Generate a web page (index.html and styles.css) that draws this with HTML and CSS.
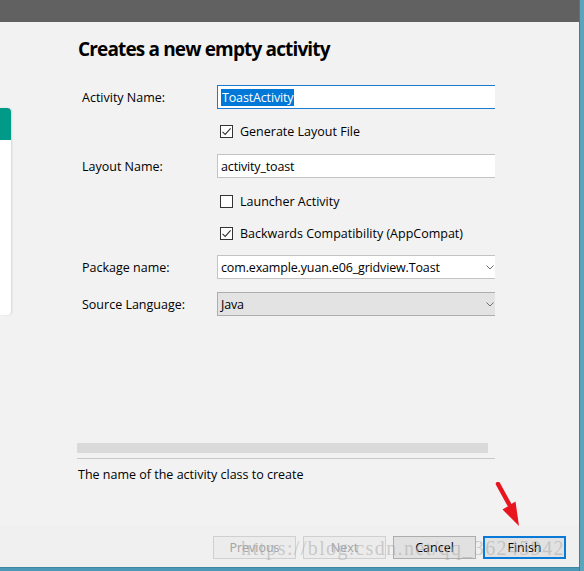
FILE: index.html
```html
<!DOCTYPE html>
<html>
<head>
<meta charset="utf-8">
<link rel="stylesheet" href="styles.css">
</head>
<body>
<div class="window">
  <div class="pane">
    <div class="titlebar"></div>
    <div class="main">
      <div class="side">
        <div class="card"><div class="card-head"></div></div>
      </div>
      <div class="content">
        <h1 class="heading">Creates a new empty activity</h1>
        <div class="form">
          <div class="row field-row">
            <span class="lbl">Activity Name:</span>
            <div class="input focused"><span class="sel">ToastActivity</span></div>
          </div>
          <div class="row check-row gap-11">
            <span class="lbl"></span>
            <div class="check">
              <span class="box"><svg viewBox="0 0 13 13" width="13" height="13"><path d="M2.5 6.8 L5.2 9.4 L10.6 3.4" fill="none" stroke="#333" stroke-width="1.1"/></svg></span>
              <span class="check-text">Generate Layout File</span>
            </div>
          </div>
          <div class="row field-row gap-11">
            <span class="lbl">Layout Name:</span>
            <div class="input">activity_toast</div>
          </div>
          <div class="row check-row gap-12">
            <span class="lbl"></span>
            <div class="check">
              <span class="box"></span>
              <span class="check-text">Launcher Activity</span>
            </div>
          </div>
          <div class="row check-row gap-9">
            <span class="lbl"></span>
            <div class="check">
              <span class="box"><svg viewBox="0 0 13 13" width="13" height="13"><path d="M2.5 6.8 L5.2 9.4 L10.6 3.4" fill="none" stroke="#333" stroke-width="1.1"/></svg></span>
              <span class="check-text">Backwards Compatibility (AppCompat)</span>
            </div>
          </div>
          <div class="row field-row gap-10">
            <span class="lbl">Package name:</span>
            <div class="input select">
              <span class="val">com.example.yuan.e06_gridview.Toast</span>
              <svg class="chev" viewBox="0 0 8 5" width="8" height="5"><path d="M0.5 0.5 L4 4 L7.5 0.5" fill="none" stroke="#707070" stroke-width="1"/></svg>
            </div>
          </div>
          <div class="row field-row gap-13">
            <span class="lbl">Source Language:</span>
            <div class="input select combo">
              <span class="val">Java</span>
              <svg class="chev" viewBox="0 0 8 5" width="8" height="5"><path d="M0.5 0.5 L4 4 L7.5 0.5" fill="none" stroke="#707070" stroke-width="1"/></svg>
            </div>
          </div>
        </div>
        <div class="bottom">
          <div class="hscroll"></div>
          <div class="sep"></div>
          <p class="help">The name of the activity class to create</p>
        </div>
      </div>
    </div>
    <div class="footer">
      <button class="btn disabled">Previous</button>
      <button class="btn disabled">Next</button>
      <button class="btn">Cancel</button>
      <button class="btn primary">Finish</button>
    </div>
    <div class="bottom-edge"></div>
  </div>
  <div class="right-edge"></div>
  <div class="watermark">https://blog.csdn.net/qq_36245942</div>
  <svg class="arrow" viewBox="0 0 40 50" width="40" height="50">
    <path d="M3 2 L14 22" stroke="#e8141e" stroke-width="4.5" stroke-linecap="round" fill="none"/>
    <path d="M24 44 L7.5 27.5 L20.5 19.5 Z" fill="#e8141e"/>
  </svg>
</div>
</body>
</html>
```

FILE: styles.css
```css
* { box-sizing: border-box; }
html, body { margin: 0; padding: 0; }
body {
  width: 584px;
  height: 571px;
  overflow: hidden;
  font-family: "Open Sans", "Noto Sans", sans-serif;
  font-size: 12.5px;
  color: #000;
}
.window {
  position: relative;
  display: grid;
  grid-template-columns: 579px 5px;
  width: 584px;
  height: 571px;
}
.pane {
  display: flex;
  flex-direction: column;
  height: 571px;
  background: #f2f2f2;
}
.titlebar { height: 22px; background: #616161; flex: none; }
.main { flex: 1; display: flex; min-height: 0; }
.side { width: 77px; flex: none; }
.card {
  margin-top: 86px;
  width: 11px;
  height: 207px;
  background: #fff;
  border-radius: 0 4px 4px 0;
  box-shadow: 1px 0 2px rgba(0,0,0,0.12);
  overflow: hidden;
}
.card-head { height: 32px; background: #009a88; }
.content {
  width: 418px;
  display: flex;
  flex-direction: column;
}
.heading {
  margin: 0;
  padding: 15px 0 0 1px;
  font-size: 19px;
  line-height: 24px;
  font-weight: 700;
  letter-spacing: -0.85px;
}
.form { margin-top: 24px; padding-left: 5px; }
.row { display: grid; grid-template-columns: 135px 278px; align-items: center; }
.field-row { height: 24px; }
.check-row { height: 23px; }
.gap-9 { margin-top: 9px; }
.gap-10 { margin-top: 10px; }
.gap-11 { margin-top: 11px; }
.gap-12 { margin-top: 12px; }
.gap-13 { margin-top: 13px; }
.lbl { font-size: 12.5px; }
.input {
  height: 24px;
  background: #fff;
  border: 1px solid #c3c3c3;
  border-right: none;
  padding-left: 3px;
  display: flex;
  align-items: center;
  font-size: 12.5px;
  letter-spacing: -0.15px;
  white-space: nowrap;
}
.input.focused { border-color: #1b7bd0; }
.sel {
  background: #0078d7;
  color: #fff;
  line-height: 17px;
  padding: 0 1px;
}
.select { justify-content: space-between; padding-right: 0; }
.combo { background: #e3e3e3; border-color: #adadad; }
.chev { margin-right: 1px; }
.check { display: flex; align-items: center; padding-left: 3px; gap: 7px; }
.box {
  width: 13px; height: 13px;
  border: 1px solid #333;
  background: #fff;
  display: block;
  position: relative;
}
.box svg { display: block; margin: -1px 0 0 -1px; }
.check-text { font-size: 12.5px; }
.bottom { margin-top: auto; padding-bottom: 42px; }
.hscroll { width: 411px; height: 10px; background: #dadada; }
.sep { margin-top: 5px; height: 1px; background: #c8c8c8; }
.help { margin: 8px 0 0 1px; font-size: 12.5px; line-height: 16px; }
.footer {
  height: 42px;
  flex: none;
  background: #f0f0f0;
  display: flex;
  justify-content: flex-end;
  align-items: flex-start;
  gap: 7px;
  padding: 11px 13px 0 0;
}
.btn {
  width: 83px;
  height: 23px;
  background: #e1e1e1;
  border: 1px solid #adadad;
  font-family: "Open Sans", "Noto Sans", sans-serif;
  font-size: 12.5px;
  color: #000;
  padding: 0;
}
.btn.disabled { background: #ececec; border-color: #d0d0d0; color: #a3a3a3; }
.btn.primary { border: 2px solid #0a7ad9; }
.bottom-edge { height: 4px; background: #4c98b6; border-top: 1px solid #3f86a3; flex: none; }
.right-edge { background: #5ca3be; border-left: 1px solid #3d7d98; }
.watermark {
  position: absolute;
  left: 241px;
  top: 537px;
  font-family: "Liberation Serif", serif;
  font-size: 20px;
  letter-spacing: 1.4px;
  color: rgba(170,170,170,0.55);
  white-space: nowrap;
  pointer-events: none;
}
.arrow { position: absolute; left: 495px; top: 482px; }
```
